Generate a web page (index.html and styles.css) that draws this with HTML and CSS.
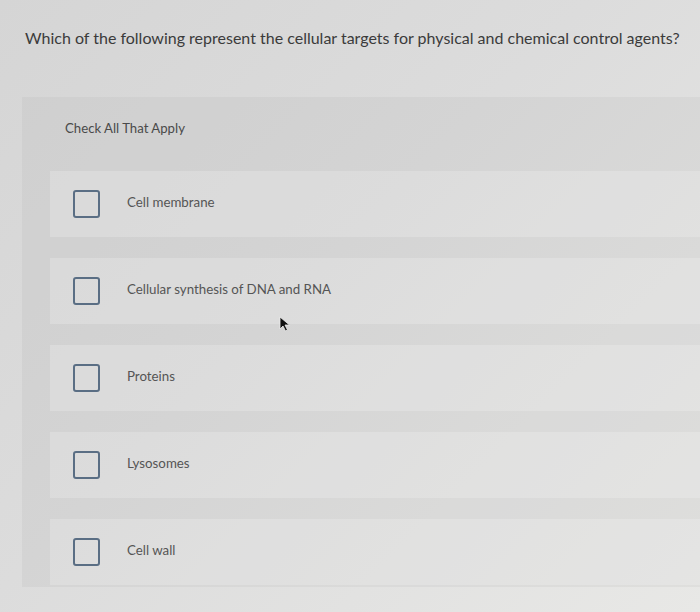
FILE: index.html
```html
<!DOCTYPE html>
<html>
<head>
<meta charset="utf-8">
<link rel="stylesheet" href="styles.css">
</head>
<body>
<div class="page">
  <p class="question">Which of the following represent the cellular targets for physical and chemical control agents?</p>
  <div class="panel">
    <div class="panel-head">Check All That Apply</div>
    <ul class="options">
      <li class="option"><span class="box"></span><span class="label">Cell membrane</span></li>
      <li class="option"><span class="box"></span><span class="label">Cellular synthesis of DNA and RNA</span></li>
      <li class="option"><span class="box"></span><span class="label">Proteins</span></li>
      <li class="option"><span class="box"></span><span class="label">Lysosomes</span></li>
      <li class="option"><span class="box"></span><span class="label">Cell wall</span></li>
    </ul>
  </div>
  <svg class="cursor" width="12" height="16" viewBox="0 0 12 16"><path d="M1 1 L1 13 L4 10 L6.5 15 L8.5 14 L6 9 L10.5 9 Z" fill="#111" stroke="#eee" stroke-width="0.8"/></svg>
</div>
</body>
</html>
```
FILE: styles.css
```css
html, body {
  margin: 0;
  padding: 0;
}
body {
  width: 700px;
  height: 612px;
  overflow: hidden;
  background: linear-gradient(135deg, #d5d5d5 0%, #dcdcdc 45%, #e8e8e6 100%);
  font-family: Lato, "Open Sans", "Liberation Sans", sans-serif;
}
.page {
  position: relative;
  height: 612px;
}
.question {
  margin: 0;
  padding: 28px 0 0 25px;
  height: 97px;
  box-sizing: border-box;
  font-size: 16px;
  line-height: 20px;
  color: #3b3b3b;
}
.panel {
  margin-left: 22px;
  background: rgba(150, 150, 150, 0.1);
  padding-bottom: 2px;
}
.panel-head {
  height: 74px;
  box-sizing: border-box;
  padding: 23px 0 0 43px;
  font-size: 13.2px;
  line-height: 16px;
  color: #4a4a4a;
}
.options {
  list-style: none;
  margin: 0;
  padding: 0 0 0 28px;
  display: flex;
  flex-direction: column;
  gap: 21px;
}
.option {
  height: 66px;
  display: flex;
  align-items: center;
  background: rgba(255, 255, 255, 0.2);
}
.box {
  margin-left: 23px;
  width: 27px;
  height: 28px;
  box-sizing: border-box;
  border: 2px solid #5a6e84;
  border-radius: 3px;
  flex: none;
}
.label {
  margin-left: 27px;
  font-size: 13.3px;
  color: #555;
  margin-top: -4px;
}
.cursor {
  position: absolute;
  left: 279px;
  top: 316px;
}
```
